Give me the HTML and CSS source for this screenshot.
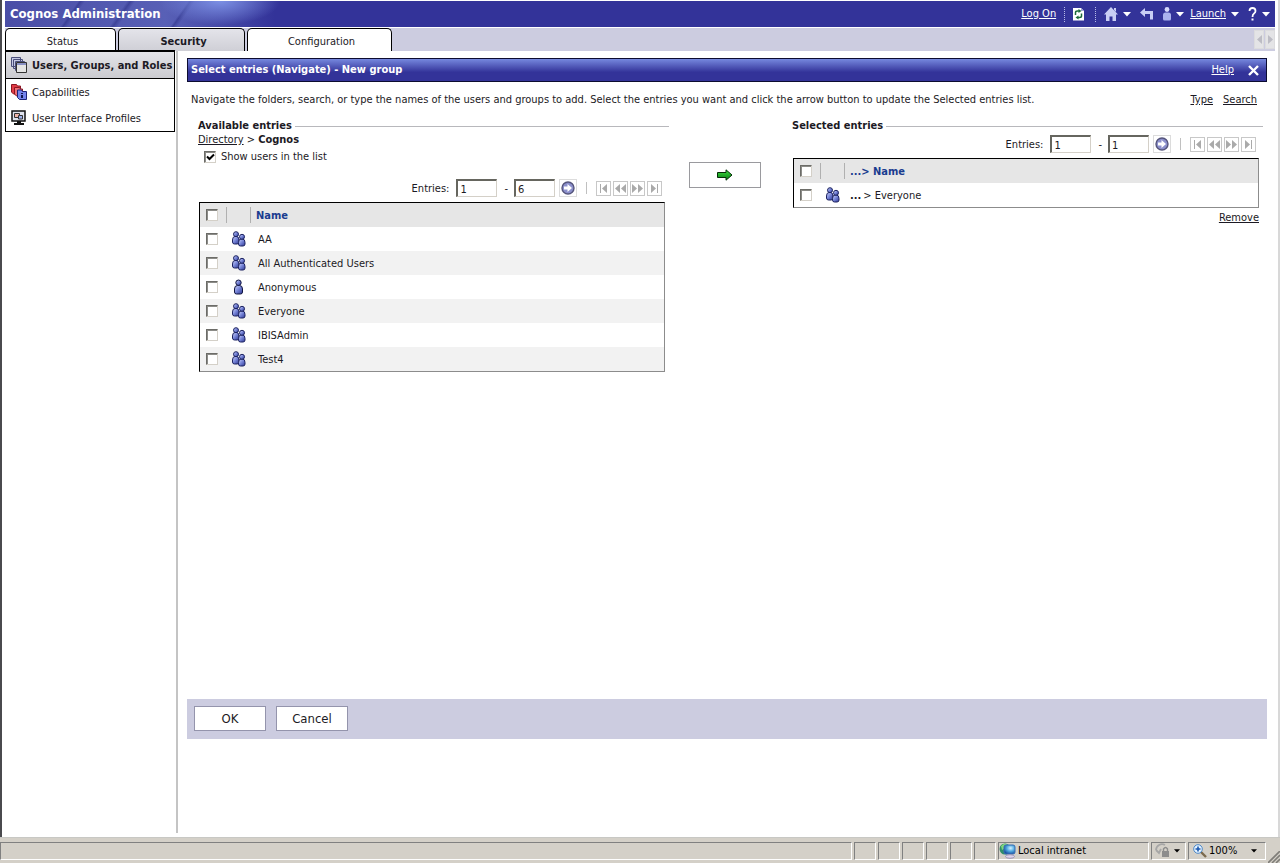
FILE: index.html
```html
<!DOCTYPE html>
<html lang="en">
<head>
    <meta charset="UTF-8">
    <meta name="viewport" content="width=device-width, initial-scale=1.0">
    <title>Cognos Administration</title>
    <link rel="stylesheet" href="styles.css">
</head>
<body>
    <!-- shared icons -->
    <svg class="icon-defs" aria-hidden="true">
        <defs>
            <linearGradient id="figure" x1="0" y1="0" x2="1" y2="1">
                <stop offset="0" stop-color="#d4daff"/>
                <stop offset="0.5" stop-color="#7482d6"/>
                <stop offset="1" stop-color="#2c3690"/>
            </linearGradient>
            <linearGradient id="greenArrow" x1="0" y1="0" x2="0" y2="1">
                <stop offset="0" stop-color="#3fe03f"/>
                <stop offset="1" stop-color="#057a12"/>
            </linearGradient>
            <radialGradient id="globe" cx="0.6" cy="0.35" r="0.7">
                <stop offset="0" stop-color="#d5f2ff"/>
                <stop offset="0.5" stop-color="#4fa9e0"/>
                <stop offset="1" stop-color="#154b9c"/>
            </radialGradient>
        </defs>
        <symbol id="user" viewBox="0 0 16 16">
            <path d="M3.500 10Q3.500 6.500 6.500 6.500h2Q11.500 6.500 11.500 10v3q0 2-2 2h-4q-2 0-2-2z" fill="url(#figure)" stroke="#10143f"/>
            <circle cx="7.500" cy="3.700" r="2.700" fill="url(#figure)" stroke="#10143f"/>
        </symbol>
        <symbol id="group" viewBox="0 0 16 16">
            <path d="M1.500 9Q1.500 5.500 4 5.500h1.500Q8 5.500 8 9v2q0 2-2 2H3.500q-2 0-2-2z" fill="url(#figure)" stroke="#1c2260"/>
            <circle cx="5" cy="3.200" r="2.500" fill="url(#figure)" stroke="#1c2260"/>
            <path d="M7.500 11.500q0-3.500 2.500-3.500h1.500q2.500 0 2.500 3.500v1.500q0 2-2 2H9.500q-2 0-2-2z" fill="url(#figure)" stroke="#1c2260"/>
            <circle cx="11" cy="5.800" r="2.500" fill="url(#figure)" stroke="#1c2260"/>
        </symbol>
        <symbol id="go" viewBox="0 0 14 14">
            <circle cx="7" cy="7" r="6" fill="#8c90cc" stroke="#55557c" stroke-width="1.400"/>
            <path d="M3 5.500h3.500V3L11 7l-4.500 4V8.500H3z" fill="#fff"/>
        </symbol>
        <symbol id="first" viewBox="0 0 13 13">
            <path d="M3 2h1v9H3zM10 2v9L5 6.500z" fill="#aaa"/>
        </symbol>
        <symbol id="prev" viewBox="0 0 13 13">
            <path d="M6 2v9L1 6.500zM12 2v9L7 6.500z" fill="#aaa"/>
        </symbol>
        <symbol id="next" viewBox="0 0 13 13">
            <path d="M1 2v9l5-4.500zM7 2v9l5-4.500z" fill="#aaa"/>
        </symbol>
        <symbol id="last" viewBox="0 0 13 13">
            <path d="M3 2v9l5-4.500zM9 2h1v9H9z" fill="#aaa"/>
        </symbol>
        <symbol id="down" viewBox="0 0 8 5">
            <path d="M0 0h8L4 4.500z" fill="currentColor"/>
        </symbol>
    </svg>

    <div class="window">
        <header class="banner">
            <h1>Cognos Administration</h1>
            <nav class="toolbar" aria-label="Toolbar">
                <a href="#" class="log-on">Log On</a>
                <span class="divider"></span>
                <button type="button" class="tool refresh" aria-label="Refresh">
                    <svg width="12" height="14" viewBox="0 0 12 14"><path d="M0 1h8l3 3v9.500H0z" fill="#fff"/><path d="M8 1v3h3" fill="#9ca2d4"/><path d="M2.500 8V5.500Q2.500 4 4.500 4H6M8.500 6.500V9q0 1.500-2 1.500H5" fill="none" stroke="#1c6a3a" stroke-width="1.500"/><path d="M5.500 2v4L8.500 4zM5.500 8.500v4L2.500 10.500z" fill="#1c6a3a"/></svg>
                </button>
                <span class="divider"></span>
                <button type="button" class="tool home" aria-label="Home">
                    <svg width="14" height="14" viewBox="0 0 14 14"><path d="M7 0l7 7.500h-2V14H8.500V9.500h-3V14H2V7.500H0z" fill="#c9cef4"/><path d="M10 1h2v4l-2-2z" fill="#c9cef4"/></svg>
                    <svg width="8" height="5"><use href="#down"/></svg>
                </button>
                <button type="button" class="tool back" aria-label="Return">
                    <svg width="14" height="12" viewBox="0 0 14 12"><path d="M5 0v3h8v8.500h-3V6H5v3L0 4.500z" fill="#c9cef4"/></svg>
                </button>
                <button type="button" class="tool person" aria-label="My area">
                    <svg width="8" height="14" viewBox="0 0 8 14"><circle cx="4" cy="2.500" r="2.400" fill="#d3d7fa"/><path d="M0 8q0-2.500 2.500-2.500h3Q8 5.500 8 8v4q0 1.500-1.500 1.500h-5Q0 13.500 0 12z" fill="#aab2ee"/></svg>
                    <svg width="8" height="5"><use href="#down"/></svg>
                </button>
                <button type="button" class="tool launch"><span>Launch</span> <svg width="8" height="5"><use href="#down"/></svg></button>
                <button type="button" class="tool help" aria-label="Help menu">
                    <svg width="9" height="14" viewBox="0 0 9 14"><path d="M1.500 4Q1.500 1 4.500 1t3 3q0 1.500-1.500 2.500T4.500 10" fill="none" stroke="#fff" stroke-width="1.800"/><path d="M3.500 11.500h2v2h-2z" fill="#fff"/></svg>
                    <svg width="8" height="5"><use href="#down"/></svg>
                </button>
            </nav>
        </header>

        <nav class="tabs" aria-label="Sections">
            <a href="#" class="tab tab-status">Status</a>
            <a href="#" class="tab tab-security active">Security</a>
            <a href="#" class="tab tab-config">Configuration</a>
            <div class="tab-scroll">
                <button type="button" aria-label="Scroll left"><svg width="5" height="9" viewBox="0 0 5 9"><path d="M5 0v9L0 4.500z" fill="#bcbcc4"/></svg></button>
                <button type="button" aria-label="Scroll right"><svg width="5" height="9" viewBox="0 0 5 9"><path d="M0 0v9l5-4.500z" fill="#bcbcc4"/></svg></button>
            </div>
        </nav>

        <div class="columns">
            <aside class="sidebar">
                <ul class="menu">
                    <li><a href="#" class="current">
                        <svg width="16" height="16" viewBox="0 0 16 16"><g fill="#c4c8e4" stroke="#4a4e7a"><path d="M.5 .5h9v9h-9zM2.500 2.500h9v9h-9zM4.500 4.500h9v9h-9z"/></g><path d="M5.500 5.500h10v10h-10z" fill="#e4e4e4" stroke="#333"/><path d="M6 6h9v2H6z" fill="#8890c4"/></svg>
                        <span>Users, Groups, and Roles</span></a></li>
                    <li><a href="#">
                        <svg width="16" height="16" viewBox="0 0 16 16"><path d="M.5 .5h5l1 1.500h3v8h-7l-2-2z" fill="#e23c46" stroke="#8c1520"/><path d="M3.500 3.500h5l1 1.500h2v7h-6l-2-2z" fill="#f07078" stroke="#8c1520"/><path d="M6.500 6h4l1 1.500h4v8h-7l-2-2z" fill="#7484ec" stroke="#1c2478"/><path d="M10 9h2v1h-2zM10 11h2v3h-2z" fill="#101850"/></svg>
                        <span>Capabilities</span></a></li>
                    <li><a href="#">
                        <svg width="16" height="16" viewBox="0 0 16 16"><path d="M1 1h13v10H1z" fill="#dfe3ee" stroke="#111" stroke-width="1.500"/><path d="M3.500 3.500h5v4h-5z" fill="#f0b4a8" stroke="#333"/><path d="M7.500 5.500h4v3.500h-4z" fill="#9cb0ec" stroke="#333"/><path d="M6 11h4v2h3v2H3v-2h3z" fill="#111"/></svg>
                        <span>User Interface Profiles</span></a></li>
                </ul>
            </aside>

            <main class="dialog">
                <div class="dialog-title">
                    <h2>Select entries (Navigate) - New group</h2>
                    <a href="#">Help</a>
                    <button type="button" aria-label="Close"><svg width="11" height="11" viewBox="0 0 11 11"><path d="M1 1l9 9M10 1l-9 9" stroke="#fff" stroke-width="2.400"/></svg></button>
                </div>

                <div class="intro">
                    <p>Navigate the folders, search, or type the names of the users and groups to add. Select the entries you want and click the arrow button to update the Selected entries list.</p>
                    <a href="#">Type</a>
                    <a href="#">Search</a>
                </div>

                <div class="picker">
                    <section class="available">
                        <h3>Available entries</h3>
                        <p class="path"><a href="#">Directory</a> &gt; <b>Cognos</b></p>
                        <label class="show-users"><input type="checkbox" checked> Show users in the list</label>
                        <div class="pager">
                            <label for="availFrom">Entries:</label>
                            <input type="text" id="availFrom" value="1">
                            <label for="availTo" class="dash">-</label>
                            <input type="text" id="availTo" value="6">
                            <button type="button" class="go" aria-label="Go"><svg width="14" height="14"><use href="#go"/></svg></button>
                            <span class="bar"></span>
                            <button type="button" aria-label="First page"><svg width="13" height="13"><use href="#first"/></svg></button>
                            <button type="button" aria-label="Previous page"><svg width="13" height="13"><use href="#prev"/></svg></button>
                            <button type="button" aria-label="Next page"><svg width="13" height="13"><use href="#next"/></svg></button>
                            <button type="button" aria-label="Last page"><svg width="13" height="13"><use href="#last"/></svg></button>
                        </div>
                        <table class="entries">
                            <thead>
                                <tr><th class="check"><input type="checkbox" aria-label="Select all"></th><th class="type"><span></span></th><th>Name</th></tr>
                            </thead>
                            <tbody>
                                <tr><td class="check"><input type="checkbox" id="aa"></td><td class="type"><svg width="16" height="16"><use href="#group"/></svg></td><td><label for="aa">AA</label></td></tr>
                                <tr><td class="check"><input type="checkbox" id="allUsers"></td><td class="type"><svg width="16" height="16"><use href="#group"/></svg></td><td><label for="allUsers">All Authenticated Users</label></td></tr>
                                <tr><td class="check"><input type="checkbox" id="anonymous"></td><td class="type"><svg width="16" height="16"><use href="#user"/></svg></td><td><label for="anonymous">Anonymous</label></td></tr>
                                <tr><td class="check"><input type="checkbox" id="everyone"></td><td class="type"><svg width="16" height="16"><use href="#group"/></svg></td><td><label for="everyone">Everyone</label></td></tr>
                                <tr><td class="check"><input type="checkbox" id="ibisAdmin"></td><td class="type"><svg width="16" height="16"><use href="#group"/></svg></td><td><label for="ibisAdmin">IBISAdmin</label></td></tr>
                                <tr><td class="check"><input type="checkbox" id="test4"></td><td class="type"><svg width="16" height="16"><use href="#group"/></svg></td><td><label for="test4">Test4</label></td></tr>
                            </tbody>
                        </table>
                    </section>

                    <div class="transfer">
                        <button type="button" aria-label="Add to selected entries">
                            <svg width="16" height="12" viewBox="0 0 16 12"><path d="M.5 3.500h8.500V.8L15 6l-6 5.200V8.500H.5z" fill="url(#greenArrow)" stroke="#032c06"/></svg>
                        </button>
                    </div>

                    <section class="selected">
                        <h3>Selected entries</h3>
                        <div class="pager">
                            <label for="selFrom">Entries:</label>
                            <input type="text" id="selFrom" value="1">
                            <label for="selTo" class="dash">-</label>
                            <input type="text" id="selTo" value="1">
                            <button type="button" class="go" aria-label="Go"><svg width="14" height="14"><use href="#go"/></svg></button>
                            <span class="bar"></span>
                            <button type="button" aria-label="First page"><svg width="13" height="13"><use href="#first"/></svg></button>
                            <button type="button" aria-label="Previous page"><svg width="13" height="13"><use href="#prev"/></svg></button>
                            <button type="button" aria-label="Next page"><svg width="13" height="13"><use href="#next"/></svg></button>
                            <button type="button" aria-label="Last page"><svg width="13" height="13"><use href="#last"/></svg></button>
                        </div>
                        <table class="entries">
                            <thead>
                                <tr><th class="check"><input type="checkbox" aria-label="Select all"></th><th class="type"><span></span></th><th>...&gt; Name</th></tr>
                            </thead>
                            <tbody>
                                <tr><td class="check"><input type="checkbox" id="selEveryone"></td><td class="type"><svg width="16" height="16"><use href="#group"/></svg></td><td class="trail"><label for="selEveryone"><b>...</b>&gt; Everyone</label></td></tr>
                            </tbody>
                        </table>
                        <a href="#" class="remove">Remove</a>
                    </section>
                </div>

                <div class="actions">
                    <button type="button">OK</button>
                    <button type="button">Cancel</button>
                </div>
            </main>
        </div>
    </div>

    <footer class="status-bar">
        <span class="pane message"></span>
        <span class="pane small"></span>
        <span class="pane small"></span>
        <span class="pane small"></span>
        <span class="pane small"></span>
        <span class="pane small"></span>
        <span class="pane small"></span>
        <span class="pane zone">
            <svg width="17" height="16" viewBox="0 0 17 16"><circle cx="6" cy="6" r="5.500" fill="#2f8f6a"/><path d="M2 3q3-3 6-2L6 5 3 7z" fill="#7fd87a"/><rect x="5" y="2" width="11" height="9" rx="2" fill="url(#globe)" stroke="#3a6fb4"/><ellipse cx="11" cy="13.500" rx="4.500" ry="1.800" fill="#dcd3ea" stroke="#9a93b4"/></svg>
            Local intranet
        </span>
        <span class="pane security">
            <svg width="16" height="15" viewBox="0 0 16 15"><path d="M1 7a6 6 0 0 1 9-5M1 7l3 3 2-4" fill="none" stroke="#a6a6a6" stroke-width="1.800"/><rect x="7" y="8" width="7" height="6" fill="#8c8c8c"/><path d="M8.500 8V6q2-3 4 0v2" fill="none" stroke="#8c8c8c" stroke-width="1.400"/></svg>
            <svg width="6" height="4"><use href="#down"/></svg>
        </span>
        <span class="pane zoom">
            <svg width="14" height="14" viewBox="0 0 14 14"><path d="M8 8l5 5" stroke="#7b6a4e" stroke-width="2.400"/><circle cx="5" cy="5" r="4.300" fill="#e4f3ff" stroke="#4a86c8"/><path d="M5 2.500v5M2.500 5h5" stroke="#1b57b0" stroke-width="1.600"/></svg>
            100%
            <svg class="caret" width="6" height="4"><use href="#down"/></svg>
        </span>
        <svg class="grip" width="12" height="12" viewBox="0 0 12 12"><path d="M0 12L12 0M4 12l8-8M8 12l4-4" stroke="#7f7d78" stroke-width="1.600"/></svg>
    </footer>
</body>
</html>
```
FILE: styles.css
```css
* {
    box-sizing: border-box;
}
body {
    margin: 0;
    min-height: 100vh;
    display: flex;
    flex-direction: column;
    font-family: "DejaVu Sans Condensed", Tahoma, "DejaVu Sans", sans-serif;
    font-size: 11px;
    line-height: 14px;
    color: #1c1a24;
    background-color: white;
}
h1, h2, h3, p, ul {
    margin: 0;
    padding: 0;
}
h1, h2, h3 {
    font-size: 11px;
    font-weight: bold;
}
a {
    color: inherit;
}
svg {
    display: block;
    flex: none;
}
button {
    font: inherit;
    color: inherit;
    padding: 0;
    cursor: pointer;
}
.icon-defs {
    position: absolute;
    width: 0;
    height: 0;
}
.window {
    flex: 1;
    display: flex;
    flex-direction: column;
    padding: 1px 3px 0 3px;
    border-left: 2px solid #4a4a4e;
    border-right: 2px solid #d8d8d8;
}

/* top banner */
.banner {
    display: flex;
    align-items: center;
    height: 26px;
    padding: 0 5px;
    color: white;
    background: radial-gradient(ellipse 60px 24px at 215px 0, #7c90e4, transparent),
        linear-gradient(125deg, transparent 60px, rgba(40, 44, 130, 0.5) 62px, transparent 66px, transparent 100px, rgba(40, 44, 130, 0.5) 103px, transparent 107px, transparent 150px, rgba(40, 44, 130, 0.5) 152px, transparent 156px),
        linear-gradient(90deg, #4a4ea6, #5860b6 160px, #333399 270px);
}
.banner h1 {
    flex: 1;
    font-size: 13px;
}
.toolbar {
    display: flex;
    align-items: center;
}
.divider {
    height: 15px;
    margin: 0 8px;
    border-left: 1px dotted #b8bce8;
}
.tool {
    display: flex;
    align-items: center;
    gap: 5px;
    margin-left: 9px;
    border: none;
    background: none;
}
.refresh {
    margin: 0 2px 0 0;
}
.home {
    margin-left: 0;
}
.launch {
    margin-left: 6px;
}
.launch span {
    text-decoration: underline;
}

/* tabs */
.tabs {
    display: flex;
    align-items: flex-end;
    gap: 2px;
    height: 23px;
    margin-top: 1px;
    background-color: #cccce0;
}
.tab {
    height: 23px;
    padding: 6px 0 0 4px;
    border: 1px solid black;
    border-bottom: none;
    border-radius: 5px 5px 0 0;
    background-color: white;
    text-align: center;
    text-decoration: none;
}
.tab-status {
    width: 111px;
}
.tab-security {
    width: 127px;
}
.tab-config {
    width: 145px;
}
.tab.active {
    font-weight: bold;
    background: linear-gradient(#e4e4ea, #cfcfd6);
}
.tab-scroll {
    display: flex;
    align-self: center;
    gap: 1px;
    margin-left: auto;
}
.tab-scroll button {
    display: flex;
    align-items: center;
    justify-content: center;
    width: 10px;
    height: 19px;
    border: 1px solid #dcdcde;
    background-color: #e4e4e6;
}

/* sidebar */
.columns {
    flex: 1;
    display: flex;
}
.sidebar {
    width: 173px;
    margin-bottom: 4px;
    border-right: 2px solid #c4c4c4;
}
.menu {
    width: 170px;
    list-style: none;
    border: 1px solid black;
    border-top-width: 2px;
    margin-top: -1px;
}
.menu a {
    display: flex;
    align-items: center;
    gap: 5px;
    height: 26px;
    padding-left: 5px;
    text-decoration: none;
    white-space: nowrap;
}
.menu span {
    padding-top: 2px;
}
.menu .current {
    height: 27px;
    font-weight: bold;
    border-bottom: 1px solid black;
    background: linear-gradient(#e4e4e8, #cbcbd0);
}

/* dialog */
.dialog {
    flex: 1;
    display: flex;
    flex-direction: column;
    padding: 7px 8px 98px 9px;
}
.dialog-title {
    display: flex;
    align-items: center;
    height: 24px;
    padding: 0 7px 0 3px;
    border: 1px solid #0c0c30;
    color: white;
    background: linear-gradient(#7688de, #333399 60%, #333399);
}
.dialog-title h2 {
    flex: 1;
}
.dialog-title button {
    margin-left: 14px;
    border: none;
    background: none;
}
.intro {
    display: flex;
    gap: 10px;
    padding: 11px 10px 0 4px;
}
.intro p {
    flex: 1;
}
.picker {
    flex: 1;
    display: grid;
    grid-template-columns: 1fr 123px 1fr;
    padding: 12px 4px 0 11px;
}
.picker h3 {
    display: flex;
    align-items: center;
    gap: 3px;
    height: 14px;
}
.picker h3::after {
    content: "";
    flex: 1;
    border-top: 1px solid #b8b8bc;
}
.path {
    line-height: 13px;
}
.show-users {
    display: flex;
    align-items: center;
    gap: 5px;
    margin: 4px 0 14px 6px;
}
input[type="checkbox"] {
    appearance: none;
    flex: none;
    display: block;
    width: 12px;
    height: 12px;
    margin: 0;
    border: 1px solid #d4d0c8;
    border-top-color: #6c6c68;
    border-left-color: #6c6c68;
    box-shadow: inset 1px 1px #8c8c88;
    background-color: white;
}
input[type="checkbox"]:checked {
    background-image: url("data:image/svg+xml,%3Csvg xmlns='http://www.w3.org/2000/svg' viewBox='0 0 10 10'%3E%3Cpath d='M2 4.500l2.500 2.500L9 2.500' fill='none' stroke='black' stroke-width='2'/%3E%3C/svg%3E");
}
.pager {
    display: flex;
    align-items: center;
    justify-content: flex-end;
    gap: 2px;
    margin-right: 7px;
    height: 20px;
}
.pager input {
    width: 41px;
    height: 18px;
    padding: 1px 2px 0;
    border: 1px solid #d4d0c8;
    border-top: 2px solid #66665f;
    border-left: 2px solid #66665f;
    font: inherit;
    color: inherit;
}
.pager label {
    margin-right: 5px;
    padding-top: 2px;
}
.pager .dash {
    margin: 0 4px 0 5px;
}
.pager button {
    display: flex;
    align-items: center;
    justify-content: center;
    width: 15px;
    height: 15px;
    border: 1px solid #c8c8c8;
    background-color: white;
}
.pager .go {
    width: 18px;
    height: 18px;
    margin-left: 2px;
    border-color: #dcdcdc;
}
.bar {
    height: 12px;
    margin: 0 7px;
    border-left: 1px solid #c0c0c0;
}
.entries {
    width: calc(100% - 5px);
    margin: 4px 4px 0 1px;
    border: 1px solid #8c8c8c;
    border-top-color: black;
    border-left-color: black;
    border-spacing: 0;
}
.entries th, .entries td {
    height: 24px;
    padding: 2px 0 0 7px;
    text-align: left;
}
.entries th {
    padding: 1px 0 0 5px;
    color: #1a3c8f;
    background-color: #e6e6e6;
}
.entries tr:nth-child(even) {
    background-color: #f2f2f2;
}
.entries .check {
    width: 26px;
    padding: 0 0 0 6px;
}
.entries .type {
    width: 25px;
    padding: 0 0 0 5px;
}
.entries th.type {
    padding: 0;
}
.entries .trail {
    padding-left: 5px;
}
.trail b {
    margin-right: 2px;
}
.type span {
    display: block;
    height: 16px;
    border-left: 1px solid #b0b0b0;
    border-right: 1px solid #b0b0b0;
}
.transfer {
    padding: 43px 0 0 20px;
}
.transfer button {
    display: flex;
    align-items: center;
    justify-content: center;
    width: 72px;
    height: 26px;
    border: 1px solid #9a9a9e;
    background-color: white;
}
.selected .pager {
    margin-top: 1px;
}
.remove {
    display: block;
    width: fit-content;
    margin: 3px 4px 0 auto;
}
.actions {
    display: flex;
    gap: 10px;
    height: 40px;
    padding: 7px;
    background-color: #cccce0;
}
.actions button {
    width: 72px;
    height: 25px;
    border: 1px solid #9494ac;
    font-size: 13px;
    background-color: white;
}

/* browser status bar */
.status-bar {
    display: flex;
    align-items: center;
    gap: 2px;
    height: 26px;
    border-top: 1px solid #c8c8c4;
    color: black;
    background-color: #d4d0c8;
}
.pane {
    display: flex;
    align-items: center;
    gap: 2px;
    height: 18px;
    border: 1px solid white;
    border-top-color: #808080;
    border-left-color: #808080;
}
.message {
    flex: 1;
}
.small {
    width: 22px;
}
.zone {
    width: 151px;
    gap: 2px;
}
.security {
    width: 35px;
    padding: 0 5px 0 3px;
    justify-content: space-between;
}
.zoom {
    width: 78px;
    gap: 2px;
    padding: 0 8px 0 4px;
}
.caret {
    margin-left: auto;
}
.grip {
    align-self: flex-end;
}
```
